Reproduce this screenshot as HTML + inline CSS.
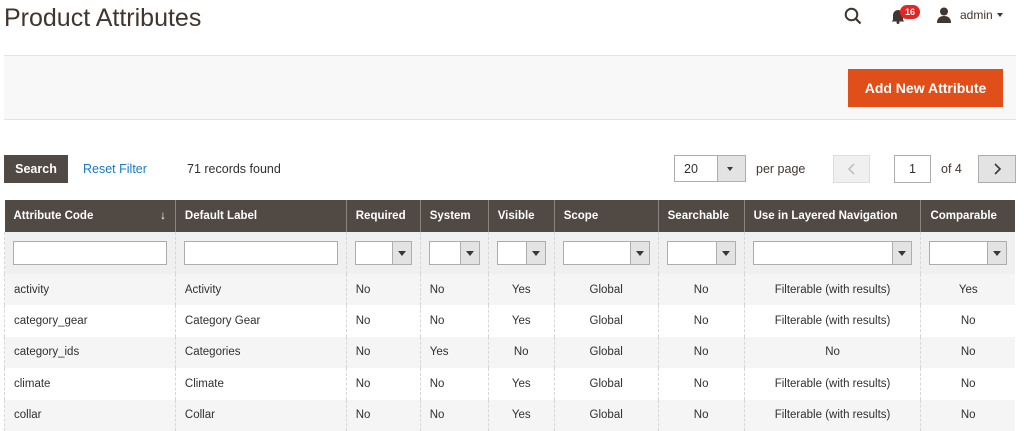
<!DOCTYPE html>
<html><head><meta charset="utf-8"><style>
*{box-sizing:border-box;margin:0;padding:0}
body{width:1024px;height:426px;overflow:hidden;background:#fff;font-family:"Liberation Sans",sans-serif;color:#303030;position:relative}
.abs{position:absolute}
h1{position:absolute;left:4px;top:4px;font-size:25px;font-weight:normal;color:#41362f}
.bar{position:absolute;left:4px;top:55px;width:1012px;height:65px;background:#f8f8f8;border-top:1px solid #e3e3e3;border-bottom:1px solid #e3e3e3}
.add{position:absolute;left:848px;top:69px;width:155px;height:38px;background:#e04f1a;color:#fff;font-weight:bold;font-size:14px;text-align:center;line-height:38px}
.btn{background:#514943;color:#fff;font-weight:bold;font-size:12.5px;text-align:center}
table{position:absolute;left:4px;top:200px;border-collapse:collapse;width:1011px;font-size:11.5px}
th{background:#514943;color:#fff;font-weight:bold;text-align:left;height:32px;padding:0 9px;border-left:1px solid #8a837f;font-size:11.5px}
th:first-child{border-left:none}
.f td{background:#f0f0f0;height:42px;padding:0 8px;border-left:1px dashed #d6d6d6}
.in{height:24px;border:1px solid #adadad;background:#fff}
.sel{height:24px;border:1px solid #adadad;background:#fff;position:relative}
.sel::after{content:"";position:absolute;right:0;top:0;width:18px;height:22px;background:#e3e3e3;border-left:1px solid #adadad}
.sel::before{content:"";position:absolute;right:5px;top:9px;border:4px solid transparent;border-top:5px solid #41362f;z-index:1}
tr.r td{height:31.4px;padding:0 9px;border-left:1px dashed #d6d6d6}
tr.r:nth-child(odd) td{background:#f5f5f5}
td.c{text-align:center}
</style></head><body>
<h1>Product Attributes</h1>
<svg class="abs" style="left:844px;top:7px" width="18" height="18" viewBox="0 0 18 18"><circle cx="7.5" cy="7.5" r="5.8" fill="none" stroke="#41362f" stroke-width="2"/><path d="M11.5 11.5L16.5 16.5" stroke="#41362f" stroke-width="2.2"/></svg>
<svg class="abs" style="left:891px;top:8px" width="14" height="16" viewBox="0 0 14 16"><path d="M2 12V7a5 5 0 0 1 10 0v5l1.5 1.5h-13z" fill="#41362f"/><circle cx="7" cy="14.5" r="1.5" fill="#41362f"/></svg>
<div class="abs" style="left:900px;top:5px;width:20px;height:14px;background:#e22626;border-radius:7px;color:#fff;font-size:9px;font-weight:bold;text-align:center;line-height:14px">16</div>
<svg class="abs" style="left:936px;top:7px" width="16" height="16" viewBox="0 0 16 16"><circle cx="8" cy="4.5" r="4" fill="#41362f"/><path d="M1 16c0-5 3-7 7-7s7 2 7 7z" fill="#41362f"/></svg>
<div class="abs" style="left:960px;top:8px;font-size:12px;color:#41362f">admin</div>
<div class="abs" style="left:997px;top:13px;border:3.5px solid transparent;border-top:4px solid #41362f"></div>
<div class="bar"></div>
<div class="add">Add New Attribute</div>
<div class="abs btn" style="left:4px;top:155px;width:64px;height:28px;line-height:28px">Search</div>
<div class="abs" style="left:83px;top:162px;font-size:12.5px;color:#1979c3">Reset Filter</div>
<div class="abs" style="left:187px;top:162px;font-size:12.5px;color:#303030">71 records found</div>
<div class="abs" style="left:674px;top:155px;width:72px;height:27px;border:1px solid #adadad;background:#fff;font-size:12.5px;line-height:27px;padding-left:9px">20</div>
<div class="abs" style="left:717px;top:156px;width:28px;height:25px;background:#e3e3e3;border-left:1px solid #adadad"></div>
<div class="abs" style="left:727px;top:167px;border:3.5px solid transparent;border-top:4px solid #41362f"></div>
<div class="abs" style="left:756px;top:162px;font-size:12.5px;color:#41362f">per page</div>
<svg class="abs" style="left:833px;top:155px" width="37" height="28" viewBox="0 0 37 28"><rect x=".5" y=".5" width="36" height="27" fill="#f0f0f0" stroke="#ddd"/><path d="M21 9l-5 5 5 5" fill="none" stroke="#bbb" stroke-width="1.5"/></svg>
<div class="abs" style="left:894px;top:155px;width:37px;height:28px;border:1px solid #adadad;text-align:center;line-height:26px;font-size:12.5px">1</div>
<div class="abs" style="left:941px;top:162px;font-size:12.5px;color:#41362f">of 4</div>
<svg class="abs" style="left:978px;top:155px" width="38" height="28" viewBox="0 0 38 28"><rect x=".5" y=".5" width="37" height="27" fill="#e3e3e3" stroke="#adadad"/><path d="M17 9l5 5-5 5" fill="none" stroke="#41362f" stroke-width="1.6"/></svg>
<table>
<colgroup><col style="width:171px"><col style="width:171px"><col style="width:74px"><col style="width:68px"><col style="width:66px"><col style="width:104px"><col style="width:86px"><col style="width:177px"><col style="width:94px"></colgroup>
<tr><th>Attribute Code<span style="float:right;font-weight:normal">&#8595;</span></th><th>Default Label</th><th>Required</th><th>System</th><th>Visible</th><th>Scope</th><th>Searchable</th><th>Use in Layered Navigation</th><th>Comparable</th></tr>
<tr class="f"><td><div class="in"></div></td><td><div class="in"></div></td><td><div class="sel"></div></td><td><div class="sel"></div></td><td><div class="sel"></div></td><td><div class="sel"></div></td><td><div class="sel"></div></td><td><div class="sel"></div></td><td><div class="sel"></div></td></tr>
<tr class="r"><td>activity</td><td>Activity</td><td>No</td><td>No</td><td class="c">Yes</td><td class="c">Global</td><td class="c">No</td><td class="c">Filterable (with results)</td><td class="c">Yes</td></tr>
<tr class="r"><td>category_gear</td><td>Category Gear</td><td>No</td><td>No</td><td class="c">Yes</td><td class="c">Global</td><td class="c">No</td><td class="c">Filterable (with results)</td><td class="c">No</td></tr>
<tr class="r"><td>category_ids</td><td>Categories</td><td>No</td><td>Yes</td><td class="c">No</td><td class="c">Global</td><td class="c">No</td><td class="c">No</td><td class="c">No</td></tr>
<tr class="r"><td>climate</td><td>Climate</td><td>No</td><td>No</td><td class="c">Yes</td><td class="c">Global</td><td class="c">No</td><td class="c">Filterable (with results)</td><td class="c">No</td></tr>
<tr class="r"><td>collar</td><td>Collar</td><td>No</td><td>No</td><td class="c">Yes</td><td class="c">Global</td><td class="c">No</td><td class="c">Filterable (with results)</td><td class="c">No</td></tr>
</table>
</body></html>
